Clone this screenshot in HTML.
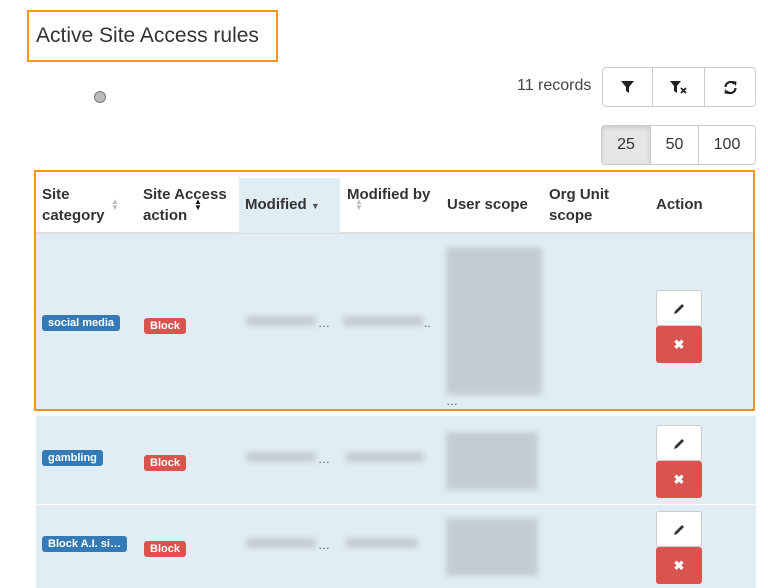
<!DOCTYPE html>
<html><head><style>
*{box-sizing:border-box;margin:0;padding:0}
body{width:768px;height:588px;background:#fff;font-family:"Liberation Sans",sans-serif;position:relative;overflow:hidden;color:#333}
.a{position:absolute}
.btn{position:absolute;border:1px solid #ccc;background:#fff;display:flex;align-items:center;justify-content:center;font-size:16px;color:#333}
.th{position:absolute;font-weight:bold;font-size:15px;line-height:21px;color:#333}
.lbl{position:absolute;color:#fff;font-weight:bold;font-size:11px;border-radius:3px;padding:0 6px;line-height:16px;white-space:nowrap}
.blur{position:absolute;background:#c3ccd2;filter:blur(3px);border-radius:2px}
.dots{position:absolute;font-size:12px;color:#555}
.edit{position:absolute;left:656px;width:46px;height:36px;background:#fff;border:1px solid #ccc;border-radius:3px;display:flex;align-items:center;justify-content:center}
.del{position:absolute;left:656px;width:46px;height:37px;background:#d9534f;border-radius:3px;color:#fff;font-weight:bold;display:flex;align-items:center;justify-content:center;font-size:13px}
</style></head><body>
<div class="a" style="left:27px;top:10px;width:251px;height:52px;border:2px solid #f7941d"></div>
<div class="a" style="left:36px;top:24px;font-size:21px;color:#333">Active Site Access rules</div>
<div class="a" style="left:94px;top:91px;width:12px;height:12px;border-radius:50%;background:#bbb;border:1px solid #777"></div>
<div class="a" style="left:517px;top:77px;font-size:16px;color:#444">11 records</div>
<div class="btn" style="left:602px;top:67px;width:51px;height:40px;border-radius:4px 0 0 4px"><svg width="13" height="13" viewBox="0 0 13 13"><path d="M0 0H13L8 6V12L5 10V6Z" fill="#222"/></svg></div>
<div class="btn" style="left:652px;top:67px;width:53px;height:40px"><svg width="18" height="13" viewBox="0 0 18 13"><path d="M0 0H11L7 5V12L4 10V5Z" fill="#222"/><path d="M11 7L16 12M16 7L11 12" stroke="#222" stroke-width="1.8"/></svg></div>
<div class="btn" style="left:704px;top:67px;width:52px;height:40px;border-radius:0 4px 4px 0"><svg width="15" height="15" viewBox="0 0 15 15"><path d="M2.5 7A5 5 0 0 1 11.5 4" stroke="#222" stroke-width="2.2" fill="none"/><path d="M12.5 8A5 5 0 0 1 3.5 11" stroke="#222" stroke-width="2.2" fill="none"/><path d="M9 1L13.5 1.5L13 6Z" fill="#222"/><path d="M6 14L1.5 13.5L2 9Z" fill="#222"/></svg></div>
<div class="btn" style="left:601px;top:125px;width:50px;height:40px;background:#e6e6e6;border-radius:4px 0 0 4px;box-shadow:inset 0 2px 4px rgba(0,0,0,.12)">25</div>
<div class="btn" style="left:650px;top:125px;width:49px;height:40px">50</div>
<div class="btn" style="left:698px;top:125px;width:58px;height:40px;border-radius:0 4px 4px 0">100</div>

<div class="a" style="left:36px;top:233px;width:717px;height:176px;background:#e0edf4"></div>
<div class="a" style="left:36px;top:416px;width:720px;height:88px;background:#e0edf4"></div>
<div class="a" style="left:36px;top:505px;width:720px;height:83px;background:#e0edf4"></div>
<div class="a" style="left:36px;top:232px;width:717px;height:2px;background:#ddd"></div>
<div class="a" style="left:239px;top:178px;width:101px;height:55px;background:#e0edf4"></div>
<div class="a" style="left:34px;top:170px;width:721px;height:241px;border:2px solid #f7941d"></div>

<div class="th" style="left:42px;top:184px">Site<br>category</div>
<div class="a" style="left:111px;top:199px;font-size:8px;color:#bbb;line-height:6px">▲<br>▼</div>
<div class="th" style="left:143px;top:184px">Site Access<br>action</div>
<div class="a" style="left:194px;top:199px;font-size:8px;color:#111;line-height:6px">▲<br>▼</div>
<div class="th" style="left:245px;top:194px">Modified <span style="font-size:9px;color:#555">▼</span></div>
<div class="th" style="left:347px;top:184px">Modified by</div>
<div class="a" style="left:355px;top:199px;font-size:8px;color:#bbb;line-height:6px">▲<br>▼</div>
<div class="th" style="left:447px;top:194px">User scope</div>
<div class="th" style="left:549px;top:184px">Org Unit<br>scope</div>
<div class="th" style="left:656px;top:194px">Action</div>

<div class="lbl" style="left:42px;top:315px;background:#337ab7">social media</div>
<div class="lbl" style="left:144px;top:318px;background:#d9534f">Block</div>
<div class="blur" style="left:246px;top:316px;width:70px;height:10px"></div><div class="dots" style="left:318px;top:316px">…</div>
<div class="blur" style="left:343px;top:316px;width:80px;height:10px"></div><div class="dots" style="left:424px;top:316px">..</div>
<div class="blur" style="left:446px;top:247px;width:96px;height:148px"></div><div class="dots" style="left:446px;top:394px">…</div>
<div class="edit" style="top:290px"><svg width="13" height="13" viewBox="0 0 13 13"><path d="M1 12L2 9L9 2L11 4L4 11Z" fill="#333"/></svg></div>
<div class="del" style="top:326px">✖</div>

<div class="lbl" style="left:42px;top:450px;background:#337ab7">gambling</div>
<div class="lbl" style="left:144px;top:455px;background:#d9534f">Block</div>
<div class="blur" style="left:246px;top:452px;width:70px;height:10px"></div><div class="dots" style="left:318px;top:452px">…</div>
<div class="blur" style="left:346px;top:452px;width:78px;height:10px"></div>
<div class="blur" style="left:446px;top:432px;width:92px;height:58px"></div>
<div class="edit" style="top:425px"><svg width="13" height="13" viewBox="0 0 13 13"><path d="M1 12L2 9L9 2L11 4L4 11Z" fill="#333"/></svg></div>
<div class="del" style="top:461px">✖</div>

<div class="lbl" style="left:42px;top:536px;background:#337ab7">Block A.I. si…</div>
<div class="lbl" style="left:144px;top:541px;background:#d9534f">Block</div>
<div class="blur" style="left:246px;top:538px;width:70px;height:10px"></div><div class="dots" style="left:318px;top:538px">…</div>
<div class="blur" style="left:346px;top:538px;width:72px;height:10px"></div>
<div class="blur" style="left:446px;top:518px;width:92px;height:58px"></div>
<div class="edit" style="top:511px"><svg width="13" height="13" viewBox="0 0 13 13"><path d="M1 12L2 9L9 2L11 4L4 11Z" fill="#333"/></svg></div>
<div class="del" style="top:547px">✖</div>
</body></html>
